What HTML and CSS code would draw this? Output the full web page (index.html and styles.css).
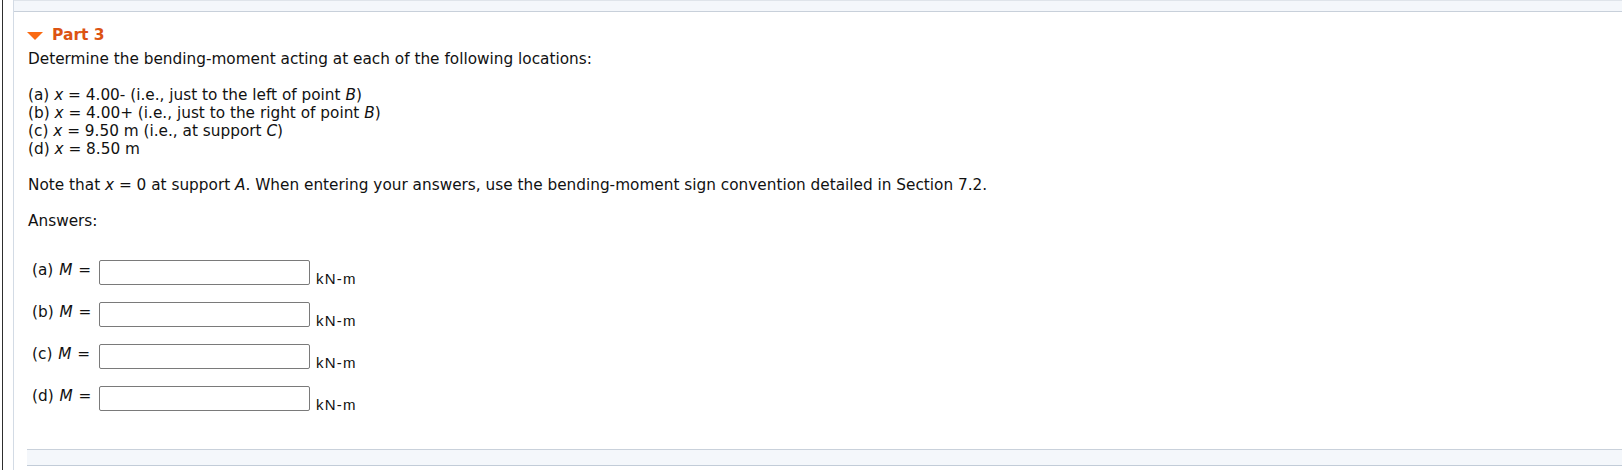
FILE: index.html
```html
<!DOCTYPE html>
<html lang="en">
<head>
<meta charset="utf-8">
<title>Part 3</title>
<link rel="stylesheet" href="styles.css">
</head>
<body>
<div class="frame">
  <div class="column">
    <div class="prev-bar"></div>
    <section class="part">
      <h2 class="part-title"><span class="caret"></span>Part 3</h2>
      <p>Determine the bending-moment acting at each of the following locations:</p>
      <p>(a) <i>x</i> = 4.00- (i.e., just to the left of point <i>B</i>)<br>
      (b) <i>x</i> = 4.00+ (i.e., just to the right of point <i>B</i>)<br>
      (c) <i>x</i> = 9.50 m (i.e., at support <i>C</i>)<br>
      (d) <i>x</i> = 8.50 m</p>
      <p>Note that <i>x</i> = 0 at support <i>A</i>. When entering your answers, use the bending-moment sign convention detailed in Section 7.2.</p>
      <p>Answers:</p>
      <div class="answers">
        <div class="row"><span class="label">(a) <i>M</i> =</span><input class="field" type="text"><span class="unit">kN-m</span></div>
        <div class="row"><span class="label">(b) <i>M</i> =</span><input class="field" type="text"><span class="unit">kN-m</span></div>
        <div class="row"><span class="label">(c) <i>M</i> =</span><input class="field" type="text"><span class="unit">kN-m</span></div>
        <div class="row"><span class="label">(d) <i>M</i> =</span><input class="field" type="text"><span class="unit">kN-m</span></div>
      </div>
      <div class="next-bar"></div>
    </section>
  </div>
</div>
</body>
</html>
```
FILE: styles.css
```css
html, body {
  margin: 0;
  padding: 0;
  background: #ffffff;
  height: 100%;
}
body {
  font-family: "DejaVu Sans", Verdana, sans-serif;
  font-size: 15.3px;
  line-height: 18px;
  color: #111111;
  overflow: hidden;
}
.frame {
  margin-left: 2px;
  border-left: 1px solid #2e2e2e;
  padding-left: 10px;
  min-height: 470px;
  box-sizing: border-box;
}
.column {
  border-left: 1px solid #d3dbe5;
  min-height: 470px;
}
.prev-bar {
  height: 10px;
  background: #f4f7fb;
  border-top: 1px solid #dfe4ea;
  border-bottom: 1px solid #c8d0da;
}
.part {
  padding: 14px 0 0 14px;
}
.part-title {
  display: flex;
  align-items: center;
  margin: 0 0 6px 0;
  font-size: 15.5px;
  line-height: 18px;
  font-weight: bold;
  color: #dc5313;
}
.caret {
  width: 0;
  height: 0;
  margin-left: -1px;
  margin-right: 9px;
  margin-top: 2px;
  border-left: 8px solid transparent;
  border-right: 8px solid transparent;
  border-top: 8px solid #fa6a12;
}
p {
  margin: 0 0 18px 0;
}
i {
  font-style: italic;
}
.answers {
  display: flex;
  flex-direction: column;
  gap: 17px;
  margin-top: 30px;
  padding-left: 4px;
}
.row {
  display: flex;
  align-items: flex-start;
  height: 25px;
}
.label {
  width: 67px;
  margin-top: 1px;
  white-space: nowrap;
  word-spacing: 1px;
}
.field {
  box-sizing: border-box;
  width: 211px;
  height: 25px;
  margin: 0;
  border: 1px solid #7a7a7a;
  border-radius: 2px;
  background: #fff;
  padding: 0 4px;
}
.unit {
  margin-left: 6px;
  margin-top: 10px;
  font-family: "Liberation Sans", Arial, sans-serif;
  font-size: 15px;
  line-height: 17px;
  letter-spacing: 1.2px;
  color: #111111;
}
.next-bar {
  margin: 38px 0 0 -1px;
  height: 15px;
  background: #f4f7fb;
  border-top: 1px solid #c9d1db;
  border-bottom: 1px solid #c2ccd8;
}
```
